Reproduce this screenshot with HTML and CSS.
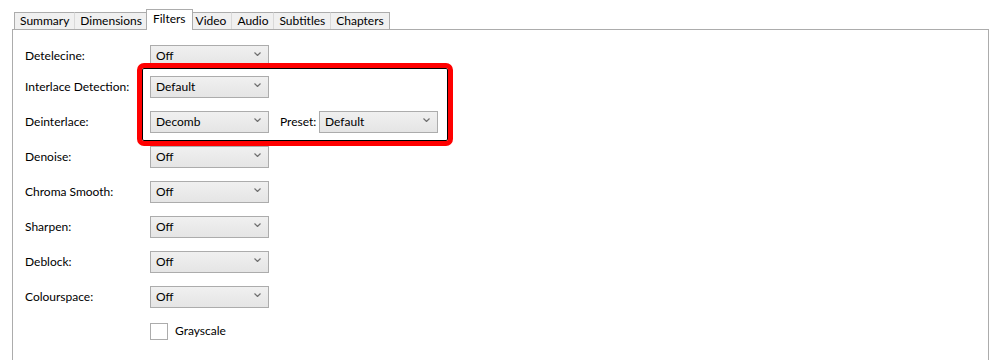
FILE: index.html
```html
<!DOCTYPE html>
<html>
<head>
<meta charset="utf-8">
<link rel="stylesheet" href="styles.css">
</head>
<body>
<div class="tabs">
  <div class="tab">Summary</div>
  <div class="tab">Dimensions</div>
  <div class="tab active">Filters</div>
  <div class="tab">Video</div>
  <div class="tab">Audio</div>
  <div class="tab">Subtitles</div>
  <div class="tab">Chapters</div>
</div>
<div class="panel">
  <div class="form">
    <div class="row first">
      <div class="label">Detelecine:</div>
      <div class="select"><span>Off</span><svg class="chev" viewBox="0 0 7 4"><path d="M0.5 0.5 L3.5 3.5 L6.5 0.5" fill="none" stroke="#707070" stroke-width="1.2"/></svg></div>
    </div>
    <div class="row second">
      <div class="label">Interlace Detection:</div>
      <div class="select"><span>Default</span><svg class="chev" viewBox="0 0 7 4"><path d="M0.5 0.5 L3.5 3.5 L6.5 0.5" fill="none" stroke="#707070" stroke-width="1.2"/></svg></div>
    </div>
    <div class="row">
      <div class="label">Deinterlace:</div>
      <div class="select"><span>Decomb</span><svg class="chev" viewBox="0 0 7 4"><path d="M0.5 0.5 L3.5 3.5 L6.5 0.5" fill="none" stroke="#707070" stroke-width="1.2"/></svg></div>
      <div class="sublabel">Preset:</div>
      <div class="select"><span>Default</span><svg class="chev" viewBox="0 0 7 4"><path d="M0.5 0.5 L3.5 3.5 L6.5 0.5" fill="none" stroke="#707070" stroke-width="1.2"/></svg></div>
    </div>
    <div class="row">
      <div class="label">Denoise:</div>
      <div class="select"><span>Off</span><svg class="chev" viewBox="0 0 7 4"><path d="M0.5 0.5 L3.5 3.5 L6.5 0.5" fill="none" stroke="#707070" stroke-width="1.2"/></svg></div>
    </div>
    <div class="row">
      <div class="label">Chroma Smooth:</div>
      <div class="select"><span>Off</span><svg class="chev" viewBox="0 0 7 4"><path d="M0.5 0.5 L3.5 3.5 L6.5 0.5" fill="none" stroke="#707070" stroke-width="1.2"/></svg></div>
    </div>
    <div class="row">
      <div class="label">Sharpen:</div>
      <div class="select"><span>Off</span><svg class="chev" viewBox="0 0 7 4"><path d="M0.5 0.5 L3.5 3.5 L6.5 0.5" fill="none" stroke="#707070" stroke-width="1.2"/></svg></div>
    </div>
    <div class="row">
      <div class="label">Deblock:</div>
      <div class="select"><span>Off</span><svg class="chev" viewBox="0 0 7 4"><path d="M0.5 0.5 L3.5 3.5 L6.5 0.5" fill="none" stroke="#707070" stroke-width="1.2"/></svg></div>
    </div>
    <div class="row">
      <div class="label">Colourspace:</div>
      <div class="select"><span>Off</span><svg class="chev" viewBox="0 0 7 4"><path d="M0.5 0.5 L3.5 3.5 L6.5 0.5" fill="none" stroke="#707070" stroke-width="1.2"/></svg></div>
    </div>
    <div class="row check-row">
      <div class="label"></div>
      <div class="check"><span class="box"></span><span>Grayscale</span></div>
    </div>
  </div>
  <div class="highlight"></div>
</div>
</body>
</html>
```
FILE: styles.css
```css
html, body {
  margin: 0;
  padding: 0;
  background: #ffffff;
}
body {
  font-family: "Lato", "Noto Sans", sans-serif;
  font-size: 12px;
  color: #000000;
  width: 996px;
  height: 360px;
  overflow: hidden;
}
.tabs {
  display: flex;
  align-items: flex-end;
  margin-left: 14px;
  padding-top: 10px;
  height: 19px;
  position: relative;
  z-index: 2;
}
.tab {
  box-sizing: border-box;
  height: 17px;
  line-height: 16px;
  padding: 0 5px;
  background: #f0f0f0;
  border: 1px solid #d9d9d9;
  border-bottom: none;
  border-right-color: #acacac;
  border-top-color: #acacac;
  margin-left: -1px;
}
.tab:first-child {
  margin-left: 0;
  border-left-color: #acacac;
}
.tab.active {
  background: #ffffff;
  height: 21px;
  line-height: 18px;
  margin-bottom: -1px;
  padding: 0 6px;
  margin-left: -2px;
  margin-right: -2px;
  border-color: #acacac;
  position: relative;
  z-index: 3;
}
.panel {
  position: relative;
  margin-left: 12px;
  width: 977px;
  box-sizing: border-box;
  height: 340px;
  border: 1px solid #acacac;
  border-bottom: none;
}
.form {
  display: flex;
  flex-direction: column;
  padding-top: 15px;
  padding-left: 12px;
  gap: 13px;
}
.row {
  display: flex;
  align-items: center;
  height: 22px;
}
.row.first {
  margin-bottom: -4px;
}
.label {
  width: 125px;
  flex: none;
  padding-bottom: 2px;
}
.select {
  box-sizing: border-box;
  width: 119px;
  height: 22px;
  border: 1px solid #acacac;
  background: linear-gradient(#f0f0f0, #e5e5e5);
  display: flex;
  align-items: center;
  justify-content: space-between;
  padding: 0 7px 2px 5px;
  flex: none;
}
.chev {
  width: 7px;
  height: 4px;
  margin-top: -2px;
}
.sublabel {
  margin-left: 11px;
  width: 39px;
  padding-bottom: 2px;
}
.check-row {
  margin-top: 2px;
  height: 17px;
}
.check {
  display: flex;
  align-items: center;
  gap: 7px;
}
.check span:last-child {
  padding-bottom: 2px;
}
.box {
  box-sizing: border-box;
  width: 18px;
  height: 17px;
  border: 1px solid #acacac;
  background: #ffffff;
}
.highlight {
  position: absolute;
  left: 124px;
  top: 33px;
  width: 316px;
  height: 83px;
  box-sizing: border-box;
  border: 5px solid #ff0000;
  border-radius: 7px;
  box-shadow: inset 0 0 0 1px #000000;
}
```
